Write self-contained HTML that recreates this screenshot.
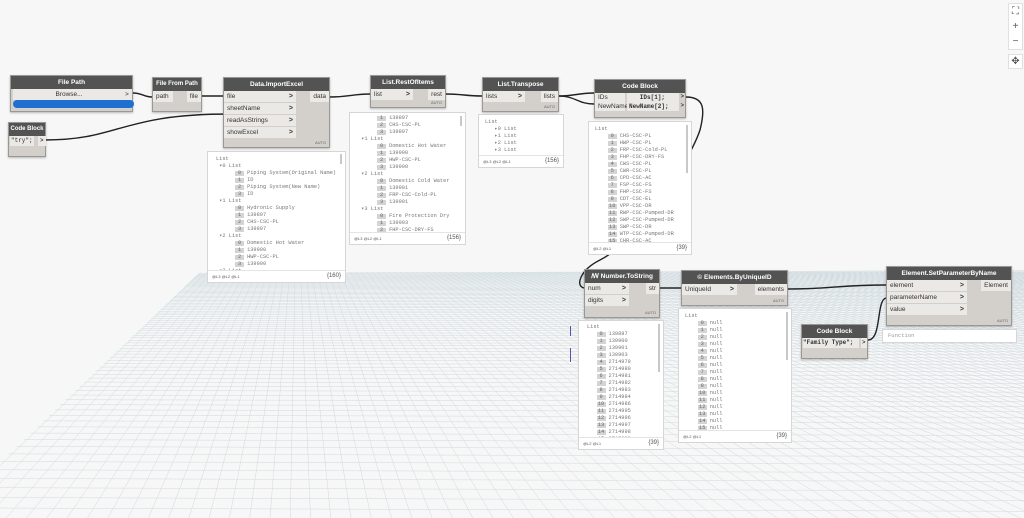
<!DOCTYPE html>
<html><head><meta charset="utf-8"><style>
*{margin:0;padding:0;box-sizing:border-box}
body{width:1024px;height:518px;background:#f7f7f7;position:relative;overflow:hidden;font-family:"Liberation Sans",sans-serif}
.a{position:absolute}
.n{position:absolute;background:#d3d0cb;border:1px solid #9a9894;box-shadow:0 1px 2px rgba(0,0,0,.25)}
.h{background:#535353;color:#fff;font-size:6.5px;font-weight:bold;text-align:center;height:13px;line-height:13px;white-space:nowrap;overflow:hidden}
.p{position:absolute;background:#ebe9e5;font-size:6.5px;color:#333;height:11px;line-height:11px;padding-left:3px;white-space:nowrap}
.p i{position:absolute;right:3px;font-style:normal;font-weight:bold;font-size:7px}
.o{position:absolute;background:#ebe9e5;font-size:6.5px;color:#333;height:11px;line-height:11px;padding:0 3px;right:0}
.auto{position:absolute;right:3px;bottom:2px;font-size:4px;color:#666}
.pv{position:absolute;background:#fff;border:1px solid #d6d6d6;font-family:"Liberation Mono",monospace;font-size:5.3px;color:#777;overflow:hidden}
.pv .r{height:7px;line-height:7px;white-space:nowrap}
.pv b{display:inline-block;background:#d4d4d4;color:#666;font-weight:normal;width:9px;text-align:center;margin-right:3px;line-height:5px}
.ft{position:absolute;left:0;right:0;bottom:0;height:12px;border-top:1px solid #e4e4e4;font-size:4px;line-height:11px;padding:0 4px;color:#555;font-family:"Liberation Sans",sans-serif;background:#fff}
.ft span{float:right;font-size:6px}
.sb{position:absolute;right:3px;width:2px;background:#c8c8c8}
.ctl{position:absolute;background:#fff;border:1px solid #e0e0e0;color:#555;text-align:center;font-size:10px}
</style></head><body>
<svg class="a" style="left:0;top:0" width="1024" height="518">
<defs><clipPath id="cp"><polygon points="200,272 1024,262 1024,518 0,518 0,462"/></clipPath></defs>
<g id="gl" clip-path="url(#cp)" stroke="#cfdadf" stroke-width="0.5" fill="none"></g>
<g stroke="#222" stroke-width="1.4" fill="none">
<path d="M133,93 C142,93 144,97 152,97"/>
<path d="M45,140 C120,140 120,114 230,114"/>
<path d="M202,96 L223,96"/>
<path d="M330,97 C350,97 352,94 370,94"/>
<path d="M446,94 C462,94 466,96 482,96"/>
<path d="M559,96 C575,96 578,93 594,93"/>
<path d="M559,96 C575,96 578,104 594,104"/>
<path d="M686,97 C705,97 705,110 700,130 C690,160 640,240 600,260 C580,270 575,286 584,288"/>
<path d="M660,288 L681,288"/>
<path d="M788,289 C830,289 840,285 886,285"/>
<path d="M868,340 C882,340 876,300 886,298"/>
</g>
</svg>
<script>
(function(){var g=document.getElementById('gl'),s='';var F=3000,G=300,cx=297,hy=180;
for(var Z=8.5;Z<=32.7;Z+=0.3){var y=hy+F/Z;s+='<line x1="0" y1="'+(y+(Z-20)*0.15)+'" x2="1024" y2="'+(y-(Z-20)*0.15)+'"/>';}
for(var X=-11;X<=80;X+=0.6){var x1=cx+G*X/32.6,x2=cx+G*X/8.5;s+='<line x1="'+x1+'" y1="272" x2="'+x2+'" y2="'+(hy+F/8.5)+'"/>';}
g.innerHTML=s;})();
</script>

<!-- File Path -->
<div class="n" style="left:10px;top:75px;width:123px;height:37px">
<div class="h">File Path</div>
<div class="p" style="left:2px;top:13px;width:112px;text-align:center;padding:0">Browse...</div>
<div class="o" style="top:13px;width:8px;padding:0 1px">&gt;</div>
<div class="a" style="left:2px;top:24px;width:121px;height:8px;background:#1f6fd0;border-radius:4px"></div>
</div>
<!-- Code block try -->
<div class="n" style="left:8px;top:122px;width:38px;height:35px">
<div class="h" style="font-size:6px">Code Block</div>
<div class="a" style="left:1px;top:13px;font-size:6px;font-family:'Liberation Mono',monospace;background:#ebe9e5;height:10px;line-height:10px;padding:0 1px;color:#333">"try";</div>
<div class="a" style="left:29px;top:13px;font-size:6px;background:#ebe9e5;height:10px;line-height:10px;padding:0 2px">&gt;</div>
</div>
<!-- File From Path -->
<div class="n" style="left:152px;top:77px;width:50px;height:35px">
<div class="h" style="font-size:6px">File From Path</div>
<div class="p" style="left:0;top:13px;width:20px">path</div>
<div class="o" style="top:13px">file</div>
</div>
<!-- ImportExcel -->
<div class="n" style="left:223px;top:77px;width:107px;height:71px">
<div class="h">Data.ImportExcel</div>
<div class="p" style="left:0;top:13px;width:72px">file<i>&gt;</i></div>
<div class="p" style="left:0;top:25px;width:72px">sheetName<i>&gt;</i></div>
<div class="p" style="left:0;top:37px;width:72px">readAsStrings<i>&gt;</i></div>
<div class="p" style="left:0;top:49px;width:72px">showExcel<i>&gt;</i></div>
<div class="o" style="top:13px">data</div>
<div class="auto">AUTO</div>
</div>
<div class="pv" style="left:207px;top:151px;width:139px;height:132px;padding:4px 0 0 8px">
<div class="r">List</div>
<div class="r">&nbsp;▾0 List</div>
<div class="r">&nbsp;&nbsp;&nbsp;&nbsp;&nbsp;&nbsp;<b>0</b>Piping System(Original Name)</div>
<div class="r">&nbsp;&nbsp;&nbsp;&nbsp;&nbsp;&nbsp;<b>1</b>ID</div>
<div class="r">&nbsp;&nbsp;&nbsp;&nbsp;&nbsp;&nbsp;<b>2</b>Piping System(New Name)</div>
<div class="r">&nbsp;&nbsp;&nbsp;&nbsp;&nbsp;&nbsp;<b>3</b>ID</div>
<div class="r">&nbsp;▾1 List</div>
<div class="r">&nbsp;&nbsp;&nbsp;&nbsp;&nbsp;&nbsp;<b>0</b>Hydronic Supply</div>
<div class="r">&nbsp;&nbsp;&nbsp;&nbsp;&nbsp;&nbsp;<b>1</b>139897</div>
<div class="r">&nbsp;&nbsp;&nbsp;&nbsp;&nbsp;&nbsp;<b>2</b>CHS-CSC-PL</div>
<div class="r">&nbsp;&nbsp;&nbsp;&nbsp;&nbsp;&nbsp;<b>3</b>139897</div>
<div class="r">&nbsp;▾2 List</div>
<div class="r">&nbsp;&nbsp;&nbsp;&nbsp;&nbsp;&nbsp;<b>0</b>Domestic Hot Water</div>
<div class="r">&nbsp;&nbsp;&nbsp;&nbsp;&nbsp;&nbsp;<b>1</b>139900</div>
<div class="r">&nbsp;&nbsp;&nbsp;&nbsp;&nbsp;&nbsp;<b>2</b>HWP-CSC-PL</div>
<div class="r">&nbsp;&nbsp;&nbsp;&nbsp;&nbsp;&nbsp;<b>3</b>139900</div>
<div class="r">&nbsp;▾3 List</div>
<div class="sb" style="top:2px;height:10px"></div>
<div class="ft">@L3 @L2 @L1<span>{160}</span></div>
</div>
<!-- RestOfItems -->
<div class="n" style="left:370px;top:75px;width:76px;height:33px">
<div class="h">List.RestOfItems</div>
<div class="p" style="left:0;top:13px;width:42px">list<i>&gt;</i></div>
<div class="o" style="top:13px">rest</div>
<div class="auto">AUTO</div>
</div>
<div class="pv" style="left:349px;top:112px;width:117px;height:133px;padding:2px 0 0 8px">
<div class="r">&nbsp;&nbsp;&nbsp;&nbsp;&nbsp;&nbsp;<b>1</b>139897</div>
<div class="r">&nbsp;&nbsp;&nbsp;&nbsp;&nbsp;&nbsp;<b>2</b>CHS-CSC-PL</div>
<div class="r">&nbsp;&nbsp;&nbsp;&nbsp;&nbsp;&nbsp;<b>3</b>139897</div>
<div class="r">&nbsp;▾1 List</div>
<div class="r">&nbsp;&nbsp;&nbsp;&nbsp;&nbsp;&nbsp;<b>0</b>Domestic Hot Water</div>
<div class="r">&nbsp;&nbsp;&nbsp;&nbsp;&nbsp;&nbsp;<b>1</b>139900</div>
<div class="r">&nbsp;&nbsp;&nbsp;&nbsp;&nbsp;&nbsp;<b>2</b>HWP-CSC-PL</div>
<div class="r">&nbsp;&nbsp;&nbsp;&nbsp;&nbsp;&nbsp;<b>3</b>139900</div>
<div class="r">&nbsp;▾2 List</div>
<div class="r">&nbsp;&nbsp;&nbsp;&nbsp;&nbsp;&nbsp;<b>0</b>Domestic Cold Water</div>
<div class="r">&nbsp;&nbsp;&nbsp;&nbsp;&nbsp;&nbsp;<b>1</b>139901</div>
<div class="r">&nbsp;&nbsp;&nbsp;&nbsp;&nbsp;&nbsp;<b>2</b>FRP-CSC-Cold-PL</div>
<div class="r">&nbsp;&nbsp;&nbsp;&nbsp;&nbsp;&nbsp;<b>3</b>139901</div>
<div class="r">&nbsp;▾3 List</div>
<div class="r">&nbsp;&nbsp;&nbsp;&nbsp;&nbsp;&nbsp;<b>0</b>Fire Protection Dry</div>
<div class="r">&nbsp;&nbsp;&nbsp;&nbsp;&nbsp;&nbsp;<b>1</b>139903</div>
<div class="r">&nbsp;&nbsp;&nbsp;&nbsp;&nbsp;&nbsp;<b>2</b>FHP-CSC-DRY-FS</div>
<div class="sb" style="top:3px;height:10px"></div>
<div class="ft">@L3 @L2 @L1<span>{156}</span></div>
</div>
<!-- Transpose -->
<div class="n" style="left:482px;top:77px;width:77px;height:35px">
<div class="h">List.Transpose</div>
<div class="p" style="left:0;top:13px;width:42px">lists<i>&gt;</i></div>
<div class="o" style="top:13px">lists</div>
<div class="auto">AUTO</div>
</div>
<div class="pv" style="left:478px;top:114px;width:86px;height:54px;padding:4px 0 0 6px">
<div class="r">List</div>
<div class="r">&nbsp;&nbsp;&nbsp;▸0 List</div>
<div class="r">&nbsp;&nbsp;&nbsp;▸1 List</div>
<div class="r">&nbsp;&nbsp;&nbsp;▸2 List</div>
<div class="r">&nbsp;&nbsp;&nbsp;▸3 List</div>
<div class="ft">@L3 @L2 @L1<span>{156}</span></div>
</div>
<!-- Code Block IDs -->
<div class="n" style="left:594px;top:79px;width:92px;height:39px">
<div class="h">Code Block</div>
<div class="p" style="left:0;top:13px;width:30px;height:9px;line-height:9px">IDs</div>
<div class="p" style="left:0;top:22px;width:30px;height:9px;line-height:9px">NewName</div>
<div class="a" style="left:32px;top:13px;width:52px;height:18px;background:#ebe9e5;font:bold 6px 'Liberation Mono',monospace;color:#333;line-height:9px;padding-left:2px">&nbsp;&nbsp;&nbsp;IDs[1];<br>NewName[2];</div>
<div class="a" style="right:1px;top:13px;font-size:6px;line-height:9px">&gt;<br>&gt;</div>
</div>
<div class="pv" style="left:588px;top:121px;width:104px;height:134px;padding:4px 0 0 6px">
<div class="r">List</div>
<div class="r">&nbsp;&nbsp;&nbsp;&nbsp;<b>0</b>CHS-CSC-PL</div>
<div class="r">&nbsp;&nbsp;&nbsp;&nbsp;<b>1</b>HWP-CSC-PL</div>
<div class="r">&nbsp;&nbsp;&nbsp;&nbsp;<b>2</b>FRP-CSC-Cold-PL</div>
<div class="r">&nbsp;&nbsp;&nbsp;&nbsp;<b>3</b>FHP-CSC-DRY-FS</div>
<div class="r">&nbsp;&nbsp;&nbsp;&nbsp;<b>4</b>CWS-CSC-PL</div>
<div class="r">&nbsp;&nbsp;&nbsp;&nbsp;<b>5</b>CWR-CSC-PL</div>
<div class="r">&nbsp;&nbsp;&nbsp;&nbsp;<b>6</b>CPD-CSC-AC</div>
<div class="r">&nbsp;&nbsp;&nbsp;&nbsp;<b>7</b>FSP-CSC-FS</div>
<div class="r">&nbsp;&nbsp;&nbsp;&nbsp;<b>8</b>FHP-CSC-FS</div>
<div class="r">&nbsp;&nbsp;&nbsp;&nbsp;<b>9</b>CDT-CSC-EL</div>
<div class="r">&nbsp;&nbsp;&nbsp;&nbsp;<b>10</b>VPP-CSC-DR</div>
<div class="r">&nbsp;&nbsp;&nbsp;&nbsp;<b>11</b>RWP-CSC-Pumped-DR</div>
<div class="r">&nbsp;&nbsp;&nbsp;&nbsp;<b>12</b>SWP-CSC-Pumped-DR</div>
<div class="r">&nbsp;&nbsp;&nbsp;&nbsp;<b>13</b>SWP-CSC-DR</div>
<div class="r">&nbsp;&nbsp;&nbsp;&nbsp;<b>14</b>WTP-CSC-Pumped-DR</div>
<div class="r">&nbsp;&nbsp;&nbsp;&nbsp;<b>15</b>CHR-CSC-AC</div>
<div class="sb" style="top:3px;height:48px"></div>
<div class="ft">@L2 @L1<span>{39}</span></div>
</div>
<!-- Number.ToString -->
<div class="n" style="left:584px;top:269px;width:76px;height:49px">
<div class="h">ꟿ Number.ToString</div>
<div class="p" style="left:0;top:13px;width:44px">num<i>&gt;</i></div>
<div class="p" style="left:0;top:25px;width:44px">digits<i>&gt;</i></div>
<div class="o" style="top:13px">str</div>
<div class="auto">AUTO</div>
</div>
<div class="pv" style="left:578px;top:320px;width:86px;height:130px;padding:3px 0 0 8px">
<div class="r">List</div>
<div class="r">&nbsp;&nbsp;&nbsp;<b>0</b>139897</div>
<div class="r">&nbsp;&nbsp;&nbsp;<b>1</b>139900</div>
<div class="r">&nbsp;&nbsp;&nbsp;<b>2</b>139901</div>
<div class="r">&nbsp;&nbsp;&nbsp;<b>3</b>139903</div>
<div class="r">&nbsp;&nbsp;&nbsp;<b>4</b>2714979</div>
<div class="r">&nbsp;&nbsp;&nbsp;<b>5</b>2714980</div>
<div class="r">&nbsp;&nbsp;&nbsp;<b>6</b>2714981</div>
<div class="r">&nbsp;&nbsp;&nbsp;<b>7</b>2714982</div>
<div class="r">&nbsp;&nbsp;&nbsp;<b>8</b>2714983</div>
<div class="r">&nbsp;&nbsp;&nbsp;<b>9</b>2714984</div>
<div class="r">&nbsp;&nbsp;&nbsp;<b>10</b>2714986</div>
<div class="r">&nbsp;&nbsp;&nbsp;<b>11</b>2714995</div>
<div class="r">&nbsp;&nbsp;&nbsp;<b>12</b>2714996</div>
<div class="r">&nbsp;&nbsp;&nbsp;<b>13</b>2714997</div>
<div class="r">&nbsp;&nbsp;&nbsp;<b>14</b>2714998</div>
<div class="r">&nbsp;&nbsp;&nbsp;<b>15</b>2715000</div>
<div class="sb" style="top:3px;height:48px"></div>
<div class="ft">@L2 @L1<span>{39}</span></div>
</div>
<!-- ByUniqueID -->
<div class="n" style="left:681px;top:270px;width:107px;height:36px">
<div class="h">© Elements.ByUniqueID</div>
<div class="p" style="left:0;top:13px;width:55px">UniqueId<i>&gt;</i></div>
<div class="o" style="top:13px">elements</div>
<div class="auto">AUTO</div>
</div>
<div class="pv" style="left:678px;top:308px;width:114px;height:135px;padding:4px 0 0 6px">
<div class="r">List</div>
<div class="r">&nbsp;&nbsp;&nbsp;&nbsp;<b>0</b>null</div>
<div class="r">&nbsp;&nbsp;&nbsp;&nbsp;<b>1</b>null</div>
<div class="r">&nbsp;&nbsp;&nbsp;&nbsp;<b>2</b>null</div>
<div class="r">&nbsp;&nbsp;&nbsp;&nbsp;<b>3</b>null</div>
<div class="r">&nbsp;&nbsp;&nbsp;&nbsp;<b>4</b>null</div>
<div class="r">&nbsp;&nbsp;&nbsp;&nbsp;<b>5</b>null</div>
<div class="r">&nbsp;&nbsp;&nbsp;&nbsp;<b>6</b>null</div>
<div class="r">&nbsp;&nbsp;&nbsp;&nbsp;<b>7</b>null</div>
<div class="r">&nbsp;&nbsp;&nbsp;&nbsp;<b>8</b>null</div>
<div class="r">&nbsp;&nbsp;&nbsp;&nbsp;<b>9</b>null</div>
<div class="r">&nbsp;&nbsp;&nbsp;&nbsp;<b>10</b>null</div>
<div class="r">&nbsp;&nbsp;&nbsp;&nbsp;<b>11</b>null</div>
<div class="r">&nbsp;&nbsp;&nbsp;&nbsp;<b>12</b>null</div>
<div class="r">&nbsp;&nbsp;&nbsp;&nbsp;<b>13</b>null</div>
<div class="r">&nbsp;&nbsp;&nbsp;&nbsp;<b>14</b>null</div>
<div class="r">&nbsp;&nbsp;&nbsp;&nbsp;<b>15</b>null</div>
<div class="sb" style="top:3px;height:48px"></div>
<div class="ft">@L2 @L1<span>{39}</span></div>
</div>
<!-- Code Block Family Type -->
<div class="n" style="left:801px;top:324px;width:67px;height:35px">
<div class="h">Code Block</div>
<div class="a" style="left:1px;top:13px;width:56px;font:bold 6px 'Liberation Mono',monospace;background:#ebe9e5;height:10px;line-height:10px;color:#333">"Family Type";</div>
<div class="a" style="left:59px;top:13px;font-size:6px;background:#ebe9e5;height:10px;line-height:10px;padding:0 1px">&gt;</div>
</div>
<!-- SetParameterByName -->
<div class="n" style="left:886px;top:266px;width:126px;height:60px">
<div class="h">Element.SetParameterByName</div>
<div class="p" style="left:0;top:13px;width:80px">element<i>&gt;</i></div>
<div class="p" style="left:0;top:25px;width:80px">parameterName<i>&gt;</i></div>
<div class="p" style="left:0;top:37px;width:80px">value<i>&gt;</i></div>
<div class="o" style="top:13px">Element</div>
<div class="auto">AUTO</div>
</div>
<div class="pv" style="left:882px;top:329px;width:135px;height:14px;font-size:5.5px;line-height:12px;padding-left:5px;color:#999">Function</div>
<div class="a" style="left:570px;top:326px;width:1px;height:10px;background:#55a"></div>
<div class="a" style="left:570px;top:348px;width:1px;height:14px;background:#55a"></div>
<div class="ctl" style="left:1008px;top:3px;width:15px;height:47px;line-height:15px">⛶<br>+<br>−</div>
<div class="ctl" style="left:1008px;top:54px;width:15px;height:15px;line-height:14px">✥</div>
</body></html>
